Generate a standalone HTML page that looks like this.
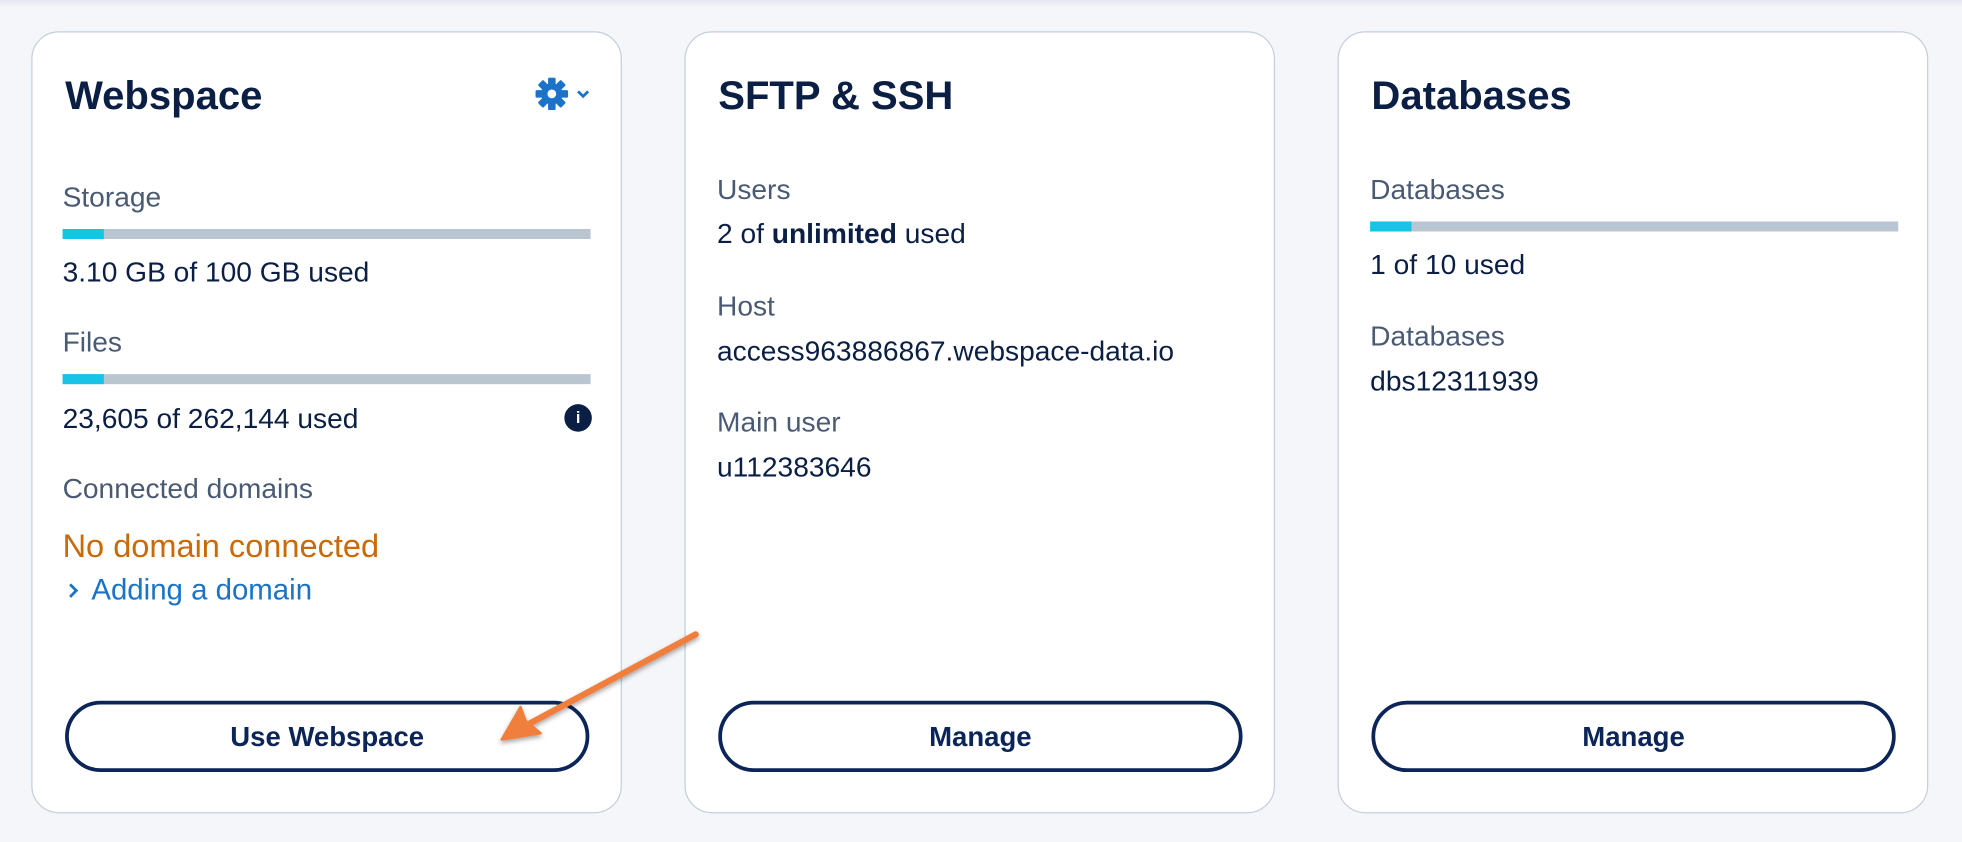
<!DOCTYPE html>
<html><head><meta charset="utf-8"><style>
html,body{margin:0;padding:0;width:1962px;height:842px;overflow:hidden;background:#f4f6f9;}
#w{position:absolute;left:0;top:0;width:1568px;height:673px;transform:scale(1.2513);transform-origin:0 0;font-family:"Liberation Sans",sans-serif;color:#0b1f44;}
.topshade{position:absolute;left:0;top:0;width:1568px;height:6px;background:linear-gradient(#e4e8ee,#f4f6f9);}
.card{position:absolute;top:25px;width:470px;height:623px;background:#fff;border:1px solid #c5cfdb;border-radius:22px;}
.t{position:absolute;white-space:nowrap;line-height:30px;}
.title{font-size:32px;font-weight:bold;line-height:40px;color:#0b1f44;}
.lab{font-size:22.5px;color:#4a5a73;}
.val{font-size:22.5px;color:#0b1f44;}
.bar{position:absolute;height:8px;width:422px;background:#b9c6d2;}
.bar i{position:absolute;left:0;top:0;height:8px;width:33px;background:#17c3e6;}
.btn{position:absolute;left:26px;top:534px;width:413px;height:51px;border:3px solid #0b2559;border-radius:30px;text-align:center;line-height:51px;font-size:22px;font-weight:bold;color:#0b2559;}
</style></head><body><div id="w">
<div class="topshade"></div>

<div class="card" style="left:25px">
  <div class="t title" style="left:26px;top:30px">Webspace</div>
  <svg style="position:absolute;left:401px;top:36px" width="48" height="26" viewBox="0 0 48 26">
    <g fill="#1a73c8" transform="translate(14,13)">
      <circle r="8.5"/>
      <g><rect x="-3" y="-13" width="6" height="26" rx="1"/><rect x="-3" y="-13" width="6" height="26" rx="1" transform="rotate(45)"/><rect x="-3" y="-13" width="6" height="26" rx="1" transform="rotate(90)"/><rect x="-3" y="-13" width="6" height="26" rx="1" transform="rotate(135)"/></g>
      <circle r="3.5" fill="#fff"/>
    </g>
    <path d="M35 11 L39 15 L43 11" stroke="#1a73c8" stroke-width="2.2" fill="none"/>
  </svg>
  <div class="t lab" style="left:24px;top:117px">Storage</div>
  <div class="bar" style="left:24px;top:157px"><i></i></div>
  <div class="t val" style="left:24px;top:177px">3.10 GB of 100 GB used</div>
  <div class="t lab" style="left:24px;top:233px">Files</div>
  <div class="bar" style="left:24px;top:273px"><i></i></div>
  <div class="t val" style="left:24px;top:294px">23,605 of 262,144 used</div>
  <div style="position:absolute;left:425px;top:297px;width:22px;height:22px;border-radius:50%;background:#0b1f44;color:#fff;font-size:13px;font-weight:bold;text-align:center;line-height:22px">i</div>
  <div class="t lab" style="left:24px;top:350px">Connected domains</div>
  <div class="t" style="left:24px;top:395px;font-size:26px;color:#c96a06">No domain connected</div>
  <svg style="position:absolute;left:27px;top:438px" width="12" height="16" viewBox="0 0 12 16"><path d="M3 3 L8 8 L3 13" stroke="#1a73c8" stroke-width="2.2" fill="none"/></svg>
  <div class="t" style="left:47px;top:430px;font-size:23.5px;color:#1a73c8">Adding a domain</div>
  <div class="btn">Use Webspace</div>
</div>

<div class="card" style="left:547px">
  <div class="t title" style="left:26px;top:30px">SFTP &amp; SSH</div>
  <div class="t lab" style="left:25px;top:111px">Users</div>
  <div class="t val" style="left:25px;top:146px">2 of <b>unlimited</b> used</div>
  <div class="t lab" style="left:25px;top:204px">Host</div>
  <div class="t val" style="left:25px;top:240px">access963886867.webspace-data.io</div>
  <div class="t lab" style="left:25px;top:297px">Main user</div>
  <div class="t val" style="left:25px;top:333px">u112383646</div>
  <div class="btn">Manage</div>
</div>

<div class="card" style="left:1069px">
  <div class="t title" style="left:26px;top:30px">Databases</div>
  <div class="t lab" style="left:25px;top:111px">Databases</div>
  <div class="bar" style="left:25px;top:151px"><i></i></div>
  <div class="t val" style="left:25px;top:171px">1 of 10 used</div>
  <div class="t lab" style="left:25px;top:228px">Databases</div>
  <div class="t val" style="left:25px;top:264px">dbs12311939</div>
  <div class="btn">Manage</div>
</div>

<svg style="position:absolute;left:0;top:0" width="1568" height="673">
  <defs><filter id="sh" x="-20%" y="-20%" width="140%" height="140%"><feDropShadow dx="0" dy="2" stdDeviation="2" flood-color="#000" flood-opacity="0.35"/></filter></defs>
  <g filter="url(#sh)">
    <path d="M556 507 L420 580" stroke="#f07f3c" stroke-width="5" stroke-linecap="round" fill="none"/>
    <path d="M401 591 L416 565 L420 576 L432 586 Z" fill="#f07f3c" stroke="#f07f3c" stroke-width="2" stroke-linejoin="round"/>
  </g>
</svg>
</div></body></html>
